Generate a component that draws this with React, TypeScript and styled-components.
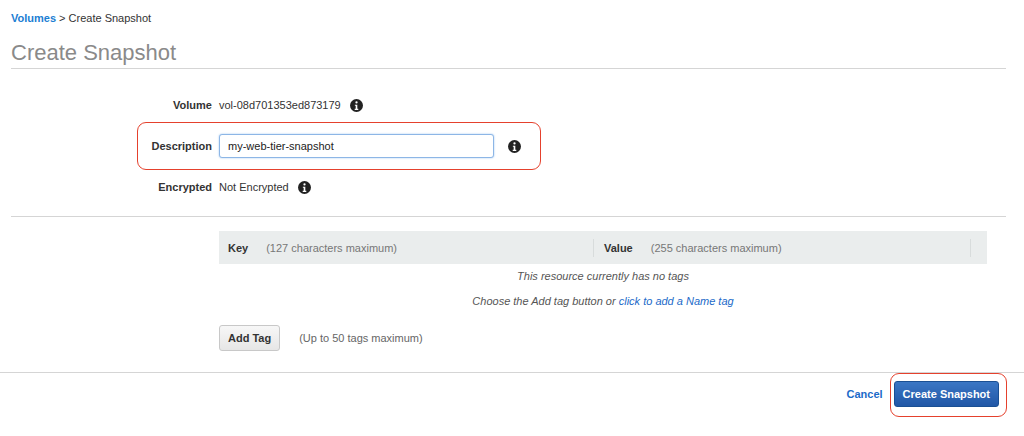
import * as React from 'react';
import styled, { createGlobalStyle } from 'styled-components';

const Global = createGlobalStyle`
  body { margin: 0; background: #fff; font-family: "Liberation Sans", Arial, sans-serif; color: #222; }
`;

const Page = styled.div`
  width: 1024px;
  height: 436px;
  overflow: hidden;
`;

const Head = styled.div`
  padding: 11px 18px 0 11px;
`;

const Crumb = styled.div`
  font-size: 11px;
  line-height: 14px;
  color: #333;
  a { color: #1b7ed3; font-weight: bold; text-decoration: none; }
`;

const Title = styled.h1`
  margin: 14px 0 0;
  font-size: 22px;
  line-height: 28px;
  font-weight: normal;
  color: #8a8a8a;
  padding-bottom: 1px;
  border-bottom: 1px solid #d5d5d5;
`;

const Form = styled.div`
  padding: 23px 0 16px;
  margin: 0 18px 0 11px;
  border-bottom: 1px solid #d5d5d5;
  display: flex;
  flex-direction: column;
  gap: 0;
`;

const Row = styled.div<{ $h: number }>`
  position: relative;
  display: grid;
  grid-template-columns: 201px auto;
  column-gap: 7px;
  align-items: center;
  height: ${({ $h }) => $h}px;
  font-size: 11px;
`;

const Label = styled.div`
  text-align: right;
  font-weight: bold;
  color: #333;
`;

const Value = styled.div`
  display: flex;
  align-items: center;
  gap: 9px;
  color: #333;
`;

const Input = styled.input`
  width: 275px;
  height: 24px;
  box-sizing: border-box;
  border: 1px solid #8db6e6;
  border-radius: 3px;
  box-shadow: 0 0 2px #9cc4f0;
  padding: 0 8px;
  font: 11px "Liberation Sans", Arial, sans-serif;
  color: #222;
  margin-right: 5px;
`;

const Highlight = styled.div<{ $l: number; $t: number; $w: number; $h: number }>`
  position: absolute;
  left: ${({ $l }) => $l}px;
  top: ${({ $t }) => $t}px;
  width: ${({ $w }) => $w}px;
  height: ${({ $h }) => $h}px;
  border: 1.5px solid #e5412d;
  border-radius: 9px;
  box-sizing: border-box;
  pointer-events: none;
`;

const Tags = styled.div`
  margin: 14px 37px 0 219px;
  font-size: 11px;
`;

const TableHead = styled.div`
  display: grid;
  grid-template-columns: 375px 1fr;
  height: 33px;
  background: #eaeded;
  align-items: center;
`;

const HeadCell = styled.div<{ $sep?: boolean }>`
  display: flex;
  gap: 18px;
  padding-left: ${({ $sep }) => ($sep ? 10 : 9)}px;
  height: 18px;
  align-items: center;
  border-right: 1px solid #d8dcdc;
  margin-right: ${({ $sep }) => ($sep ? 16 : 0)}px;
  b { color: #333; }
  span { color: #777; }
`;

const Empty = styled.div`
  text-align: center;
  font-style: italic;
  color: #555;
  line-height: 25px;
  a { color: #1b6ac9; text-decoration: none; }
  &:first-of-type { margin-top: 9px; }
`;

const AddRow = styled.div`
  display: flex;
  align-items: center;
  gap: 19px;
  margin-top: 11px;
  padding-bottom: 21px;
  color: #666;
`;

const GrayButton = styled.button`
  height: 26px;
  padding: 0 8px;
  border: 1px solid #c8c8c8;
  border-radius: 3px;
  background: linear-gradient(#f7f7f7, #e6e6e6);
  font: bold 11px "Liberation Sans", Arial, sans-serif;
  color: #333;
`;

const Footer = styled.div`
  border-top: 1px solid #d5d5d5;
  display: flex;
  justify-content: flex-end;
  align-items: center;
  gap: 11px;
  padding: 8px 25px 0 0;
  font-size: 11px;
  position: relative;
`;

const Cancel = styled.a`
  color: #1b6ac9;
  font-weight: bold;
`;

const Primary = styled.button`
  height: 26px;
  padding: 0 8px;
  border: 1px solid #1a4f93;
  border-radius: 3px;
  background: linear-gradient(#3a76c4, #2157a6);
  color: #fff;
  font: bold 11px "Liberation Sans", Arial, sans-serif;
`;

const Info = () => (
  <svg width="13" height="13" viewBox="0 0 16 16">
    <circle cx="8" cy="8" r="8" fill="#222" />
    <circle cx="8" cy="4.2" r="1.4" fill="#fff" />
    <path d="M6 7h3v5h1.2v1.4H5.8V12H7V8.4H6z" fill="#fff" />
  </svg>
);

export default function App() {
  return (
    <Page>
      <Global />
      <Head>
        <Crumb><a>Volumes</a> &gt; Create Snapshot</Crumb>
        <Title>Create Snapshot</Title>
      </Head>
      <Form>
        <Row $h="26" as={Row} $hh={0} {...({} as any)} style={undefined}>
          <Label>Volume</Label>
          <Value>vol-08d701353ed873179 <Info /></Value>
        </Row>
        <Row $h={56}>
          <Label>Description</Label>
          <Value>
            <Input defaultValue="my-web-tier-snapshot" />
            <Info />
          </Value>
          <Highlight $l={126} $t={4} $w={404} $h={48} />
        </Row>
        <Row $h={26}>
          <Label>Encrypted</Label>
          <Value>Not Encrypted <Info /></Value>
        </Row>
      </Form>
      <Tags>
        <TableHead>
          <HeadCell><b>Key</b><span>(127 characters maximum)</span></HeadCell>
          <HeadCell $sep><b>Value</b><span>(255 characters maximum)</span></HeadCell>
        </TableHead>
        <Empty>This resource currently has no tags</Empty>
        <Empty>Choose the Add tag button or <a>click to add a Name tag</a></Empty>
        <AddRow>
          <GrayButton>Add Tag</GrayButton>
          (Up to 50 tags maximum)
        </AddRow>
      </Tags>
      <Footer>
        <Cancel>Cancel</Cancel>
        <Primary>Create Snapshot</Primary>
        <Highlight $l={890} $t={0} $w={117} $h={44} />
      </Footer>
    </Page>
  );
}
